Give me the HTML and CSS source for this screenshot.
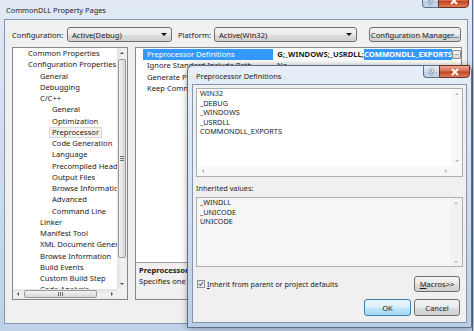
FILE: index.html
```html
<!DOCTYPE html>
<html lang="en">
<head>
    <meta charset="UTF-8">
    <meta name="viewport" content="width=device-width, initial-scale=1.0">
    <title>CommonDLL Property Pages</title>
    <link rel="stylesheet" href="styles.css">
</head>
<body>
    <div class="desktop">
        <div class="window main-window">
            <div class="caption">
                <span class="caption-title">CommonDLL Property Pages</span>
            </div>
            <div class="caption-buttons">
                <span class="cap-btn cap-help">?</span>
                <span class="cap-btn cap-close"><svg viewBox="0 0 10 8"><path d="M2 1 L8 7 M8 1 L2 7"/></svg></span>
            </div>
            <div class="client main-client">
                <div class="config-row">
                    <span class="config-label">Configuration:</span>
                    <div class="combo combo-config"><span>Active(Debug)</span><i class="tri-down"></i></div>
                    <span class="platform-label">Platform:</span>
                    <div class="combo combo-platform"><span>Active(Win32)</span><i class="tri-down"></i></div>
                    <button class="btn btn-manager">Configuration Manager...</button>
                </div>
                <div class="panes">
                    <div class="tree">
                        <ul class="tree-items">
                            <li class="lvl0">Common Properties</li>
                            <li class="lvl0">Configuration Properties</li>
                            <li class="lvl1">General</li>
                            <li class="lvl1">Debugging</li>
                            <li class="lvl1">C/C++</li>
                            <li class="lvl2">General</li>
                            <li class="lvl2">Optimization</li>
                            <li class="lvl2"><span class="tree-selected">Preprocessor</span></li>
                            <li class="lvl2">Code Generation</li>
                            <li class="lvl2">Language</li>
                            <li class="lvl2">Precompiled Headers</li>
                            <li class="lvl2">Output Files</li>
                            <li class="lvl2">Browse Information</li>
                            <li class="lvl2">Advanced</li>
                            <li class="lvl2">Command Line</li>
                            <li class="lvl1">Linker</li>
                            <li class="lvl1">Manifest Tool</li>
                            <li class="lvl1">XML Document Generator</li>
                            <li class="lvl1">Browse Information</li>
                            <li class="lvl1">Build Events</li>
                            <li class="lvl1">Custom Build Step</li>
                            <li class="lvl1">Code Analysis</li>
                        </ul>
                        <div class="scroll-v">
                            <span class="sb-btn"><i class="tri-up small"></i></span>
                            <div class="thumb-v"><span class="grip-v"></span></div>
                            <span class="sb-btn sb-end"><i class="tri-down small"></i></span>
                        </div>
                        <div class="scroll-h">
                            <span class="sb-btn"><i class="tri-left small"></i></span>
                            <div class="thumb-h"><span class="grip-h"></span></div>
                            <span class="sb-btn sb-end"><i class="tri-right small"></i></span>
                        </div>
                        <div class="scroll-corner"></div>
                    </div>
                    <div class="props">
                        <div class="prop-grid">
                            <div class="prop-row">
                                <div class="prop-name selected">Preprocessor Definitions</div>
                                <div class="prop-value">
                                    <div class="prop-edit"><span>WIN32;_DEBUG;_WINDOWS;_USRDLL;</span><span class="sel-text">COMMONDLL_EXPORTS</span></div>
                                    <span class="dots-btn">...</span>
                                </div>
                            </div>
                            <div class="prop-row">
                                <div class="prop-name">Ignore Standard Include Path</div>
                                <div class="prop-value">No</div>
                            </div>
                            <div class="prop-row">
                                <div class="prop-name">Generate Preprocessed File</div>
                                <div class="prop-value">No</div>
                            </div>
                            <div class="prop-row">
                                <div class="prop-name">Keep Comments</div>
                                <div class="prop-value">No</div>
                            </div>
                        </div>
                        <div class="prop-desc">
                            <div class="desc-title">Preprocessor Definitions</div>
                            <div>Specifies one or more preprocessor defines.<span class="desc-gap"></span>(/D[macro])</div>
                        </div>
                    </div>
                </div>
            </div>
        </div>

        <div class="window dialog">
            <div class="caption dlg-caption">
                <span class="caption-title">Preprocessor Definitions</span>
            </div>
            <div class="caption-buttons">
                <span class="cap-btn cap-help">?</span>
                <span class="cap-btn cap-close"><svg viewBox="0 0 10 8"><path d="M2 1 L8 7 M8 1 L2 7"/></svg></span>
            </div>
            <div class="client dlg-client">
                <div class="edit-box defs-box">
                    <div class="edit-text">
                        <div>WIN32</div>
                        <div>_DEBUG</div>
                        <div>_WINDOWS</div>
                        <div>_USRDLL</div>
                        <div>COMMONDLL_EXPORTS</div>
                    </div>
                    <div class="scroll-v off">
                        <span class="sb-btn"><i class="tri-up small"></i></span>
                        <span class="sb-btn sb-end"><i class="tri-down small"></i></span>
                    </div>
                    <div class="scroll-h off">
                        <span class="sb-btn"><i class="tri-left small"></i></span>
                        <span class="sb-btn sb-end"><i class="tri-right small"></i></span>
                    </div>
                    <div class="scroll-corner off"></div>
                </div>
                <div class="inherited-label">Inherited values:</div>
                <div class="edit-box inherited-box">
                    <div class="edit-text">
                        <div>_WINDLL</div>
                        <div>_UNICODE</div>
                        <div>UNICODE</div>
                    </div>
                    <div class="scroll-v off">
                        <span class="sb-btn"><i class="tri-up small"></i></span>
                        <span class="sb-btn sb-end"><i class="tri-down small"></i></span>
                    </div>
                </div>
                <div class="check-row">
                    <label class="check">
                        <span class="checkbox"><svg viewBox="0 0 8 8"><path d="M1.6 4.2 L3.3 6 L6.6 1.6"/></svg></span>
                        <span><u>I</u>nherit from parent or project defaults</span>
                    </label>
                    <button class="btn btn-macros"><u>M</u>acros&gt;&gt;</button>
                </div>
                <div class="button-row">
                    <button class="btn btn-ok">OK</button>
                    <button class="btn btn-cancel">Cancel</button>
                </div>
            </div>
        </div>
    </div>
</body>
</html>
```

FILE: styles.css
```css
body {
    margin: 0;
    font-family: "Noto Sans", "DejaVu Sans", sans-serif;
    font-size: 7.6px;
    color: #1b1b1b;
}
.desktop {
    position: relative;
    width: 474px;
    height: 331px;
    overflow: hidden;
    background: #c3d4e8;
}

/* aero windows */
.window {
    position: absolute;
    box-sizing: border-box;
    display: flex;
    flex-direction: column;
    padding: 0 4px 4px;
    border: 1px solid #5a6d8a;
    border-radius: 6px 6px 0 0;
    background: linear-gradient(180deg, #e2ebf5 0%, #d2dfee 35%, #bfd1e7 100%);
}
.main-window {
    left: -1px;
    top: -6px;
    width: 474px;
    height: 345px;
}
.dialog {
    left: 187px;
    top: 65px;
    width: 285px;
    height: 263px;
    background: linear-gradient(180deg, rgba(230, 238, 247, 0.95) 0%, rgba(212, 225, 240, 0.95) 40%, rgba(186, 205, 229, 0.95) 100%);
    box-shadow: 0 0 6px rgba(0, 0, 0, 0.35);
}
.caption {
    height: 24px;
    padding: 5px 0 0 2px;
    box-sizing: border-box;
    display: flex;
    align-items: center;
}
.dlg-caption {
    height: 18px;
    padding: 1px 0 0 4px;
}
.caption-title {
    font-size: 7.4px;
    color: #1e1e1e;
}
.caption-buttons {
    position: absolute;
    top: -1px;
    right: 3px;
    display: flex;
}
.dialog .caption-buttons {
    right: 1px;
}
.cap-btn {
    height: 14px;
    box-sizing: border-box;
    display: flex;
    align-items: center;
    justify-content: center;
    border: 1px solid #5c6e89;
}
.dialog .cap-btn {
    height: 13px;
}
.cap-help {
    width: 16px;
    border-right: none;
    border-radius: 0 0 0 4px;
    background: linear-gradient(180deg, #e6eef7 0%, #d2deec 50%, #b9cbe2 51%, #c9d9ec 100%);
    color: #fff;
    font-weight: bold;
    font-size: 8px;
    text-shadow: 0 0 2px #27364d, 0 0 1px #27364d;
}
.cap-close {
    width: 31px;
    border-radius: 0 0 4px 0;
    background: linear-gradient(180deg, #e9a895 0%, #d66d50 45%, #c3431f 55%, #dd7d5c 100%);
    border-color: #6d2f22;
}
.cap-close svg {
    width: 10px;
    height: 8px;
}
.cap-close path {
    stroke: #fff;
    stroke-width: 1.8;
    fill: none;
}

.client {
    background: #f0f0f0;
    border: 1px solid #8395b0;
    box-sizing: border-box;
}
.main-client {
    height: 305px;
}

/* configuration row */
.config-row {
    display: flex;
    align-items: center;
    height: 15px;
    margin: 7px 0 0 7px;
}
.config-label {
    width: 55px;
}
.platform-label {
    width: 36px;
    margin-left: 6px;
}
.combo {
    height: 15px;
    box-sizing: border-box;
    display: flex;
    align-items: center;
    justify-content: space-between;
    padding: 0 4px 0 4px;
    border: 1px solid #707070;
    border-radius: 3px;
    background: linear-gradient(180deg, #f3f3f3 0%, #ebebeb 50%, #dddddd 51%, #d0d0d0 100%);
}
.combo-config {
    width: 105px;
}
.combo-platform {
    width: 143px;
}
.btn {
    height: 15px;
    box-sizing: border-box;
    padding: 0;
    font: inherit;
    color: #1b1b1b;
    border: 1px solid #707070;
    border-radius: 3px;
    background: linear-gradient(180deg, #f3f3f3 0%, #ebebeb 50%, #dddddd 51%, #d0d0d0 100%);
}
.btn-manager {
    width: 92px;
    margin-left: 12px;
}

/* triangles */
.tri-down, .tri-up, .tri-left, .tri-right {
    width: 0;
    height: 0;
    border: 3px solid transparent;
}
.tri-down {
    border-top: 3px solid #111;
    border-bottom: none;
}
.tri-up {
    border-bottom: 3px solid #111;
    border-top: none;
}
.tri-left {
    border-right: 3px solid #111;
    border-left: none;
}
.tri-right {
    border-left: 3px solid #111;
    border-right: none;
}
.small {
    border-width: 2px;
}
.tri-down.small { border-top-color: #4d4d4d; border-bottom: none; }
.tri-up.small { border-bottom-color: #4d4d4d; border-top: none; }
.tri-left.small { border-right-color: #4d4d4d; border-left: none; }
.tri-right.small { border-left-color: #4d4d4d; border-right: none; }
.off .tri-down.small { border-top-color: #b4b4b4; }
.off .tri-up.small { border-bottom-color: #b4b4b4; }
.off .tri-left.small { border-right-color: #b4b4b4; }
.off .tri-right.small { border-left-color: #b4b4b4; }

/* panes */
.panes {
    display: flex;
    gap: 7px;
    height: 253px;
    margin: 5px 0 0 7px;
}
.tree {
    width: 116px;
    box-sizing: border-box;
    border: 1px solid #828790;
    background: #fff;
    display: grid;
    grid-template-columns: 1fr 10px;
    grid-template-rows: 1fr 10px;
    overflow: hidden;
}
.tree-items {
    list-style: none;
    margin: 0;
    padding: 0;
    overflow: hidden;
    white-space: nowrap;
}
.tree-items li {
    height: 11.25px;
    line-height: 11.25px;
}
.lvl0 { padding-left: 15px; }
.lvl1 { padding-left: 27px; }
.lvl2 { padding-left: 39px; }
.tree-selected {
    display: inline-block;
    margin-left: -3px;
    padding: 0 2px;
    line-height: 9px;
    border: 1px solid #d9d9d9;
    background: #f3f3f3;
}

.scroll-v {
    display: flex;
    flex-direction: column;
    background: linear-gradient(90deg, #e3e3e3 0%, #f2f2f2 60%, #ececec 100%);
}
.scroll-h {
    display: flex;
    align-items: center;
    background: linear-gradient(180deg, #e3e3e3 0%, #f2f2f2 60%, #ececec 100%);
}
.sb-btn {
    width: 10px;
    height: 10px;
    flex: none;
    display: flex;
    align-items: center;
    justify-content: center;
}
.scroll-v .sb-end {
    margin-top: auto;
}
.scroll-h .sb-end {
    margin-left: auto;
}
.scroll-corner {
    background: #f0f0f0;
}
.thumb-v {
    height: 199px;
    margin: 1px 1px 0;
    box-sizing: border-box;
    border: 1px solid #9a9a9a;
    border-radius: 2px;
    background: linear-gradient(90deg, #f2f2f2 0%, #e6e6e6 50%, #d6d6d6 100%);
    display: flex;
    align-items: center;
    justify-content: center;
}
.grip-v {
    width: 4px;
    height: 5px;
    background: repeating-linear-gradient(180deg, #6d6d6d 0 1px, transparent 1px 2px);
}
.thumb-h {
    width: 73px;
    height: 8px;
    margin-left: 1px;
    box-sizing: border-box;
    border: 1px solid #9a9a9a;
    border-radius: 2px;
    background: linear-gradient(180deg, #f2f2f2 0%, #e6e6e6 50%, #d6d6d6 100%);
    display: flex;
    align-items: center;
    justify-content: center;
}
.grip-h {
    width: 5px;
    height: 4px;
    background: repeating-linear-gradient(90deg, #6d6d6d 0 1px, transparent 1px 2px);
}

/* property grid */
.props {
    width: 327px;
    box-sizing: border-box;
    display: flex;
    flex-direction: column;
    border: 1px solid #828790;
    background: #fff;
}
.prop-grid {
    flex: 1;
    padding-top: 1px;
}
.prop-row {
    display: flex;
    height: 11.3px;
    line-height: 11.3px;
    white-space: nowrap;
}
.prop-name {
    width: 130px;
    margin-left: 7px;
    padding-left: 4px;
    box-sizing: border-box;
    overflow: hidden;
}
.prop-name.selected {
    background: #3399ff;
    color: #fff;
}
.prop-value {
    flex: 1;
    display: flex;
    align-items: center;
    margin-left: 3px;
    padding-left: 1px;
    overflow: hidden;
}
.prop-edit {
    width: 176px;
    display: flex;
    justify-content: flex-end;
    overflow: hidden;
    font-weight: bold;
}
.sel-text {
    background: #3399ff;
    color: #fff;
}
.dots-btn {
    width: 9px;
    height: 9px;
    box-sizing: border-box;
    border: 1px solid #8a8a8a;
    border-radius: 1px;
    background: linear-gradient(180deg, #f4f4f4, #d8d8d8);
    font-size: 6px;
    line-height: 5px;
    text-align: center;
    color: #333;
}
.prop-desc {
    height: 37px;
    box-sizing: border-box;
    border-top: 1px solid #a0a0a0;
    background: #f0f0f0;
    padding: 2px 3px;
    line-height: 11px;
    white-space: nowrap;
    overflow: hidden;
}
.desc-title {
    font-weight: bold;
}
.desc-gap {
    display: inline-block;
    width: 12px;
}

/* dialog content */
.dlg-client {
    flex: 1;
    display: flex;
    flex-direction: column;
    padding: 3px 3px 0;
}
.edit-box {
    box-sizing: border-box;
    border: 1px solid #abadb3;
    display: grid;
    grid-template-columns: 1fr 11px;
    font-size: 7.3px;
    line-height: 9.6px;
}
.defs-box {
    height: 89px;
    background: #fff;
    grid-template-rows: 1fr 10px;
}
.inherited-box {
    height: 70px;
    margin-top: 4px;
    background: #f6f6f6;
}
.edit-text {
    padding-left: 3px;
}
.scroll-v.off, .scroll-h.off, .scroll-corner.off {
    background: #f8f8f8;
}
.inherited-box .scroll-v.off {
    background: #f2f2f2;
}
.inherited-box .sb-btn {
    height: 9px;
}
.defs-box .sb-btn {
    width: 11px;
}
.inherited-label {
    margin-top: 6px;
    line-height: 10px;
    font-size: 7.3px;
}
.check-row {
    display: flex;
    align-items: center;
    justify-content: space-between;
    height: 16px;
    margin: 9px 3px 0 1px;
}
.check {
    display: flex;
    align-items: center;
    gap: 2px;
    font-size: 7.3px;
}
.checkbox {
    width: 8px;
    height: 8px;
    box-sizing: border-box;
    border: 1px solid #8e8f8f;
    background: linear-gradient(135deg, #dedede, #fbfbfb);
    display: flex;
}
.checkbox svg {
    width: 6px;
    height: 6px;
}
.checkbox path {
    stroke: #3e4f7a;
    stroke-width: 1.4;
    fill: none;
}
.btn-macros {
    width: 46px;
    height: 16px;
}
.button-row {
    display: flex;
    justify-content: flex-end;
    gap: 3px;
    margin: 7px 3px 0 0;
}
.btn-ok, .btn-cancel {
    height: 17px;
}
.btn-ok {
    width: 47px;
    border-color: #3c7fb1;
    background: linear-gradient(180deg, #eaf6fd 0%, #d9f0fc 50%, #bee6fd 51%, #a7d9f5 100%);
}
.btn-cancel {
    width: 46px;
}
```
